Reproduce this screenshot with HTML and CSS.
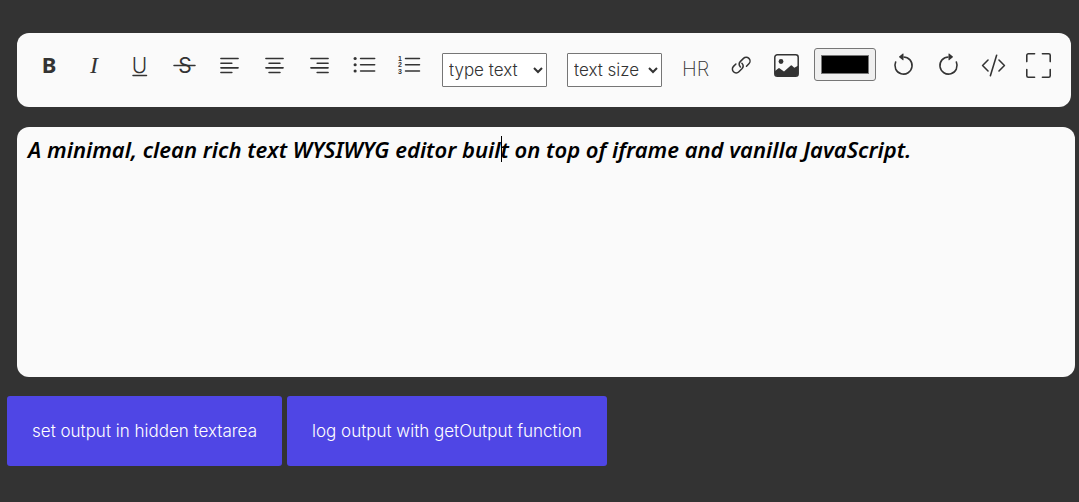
FILE: index.html
```html
<!DOCTYPE html>
<html lang="en">
<head>
<meta charset="utf-8">
<title>Rich text editor</title>
<link rel="stylesheet" href="styles.css">
</head>
<body>
<main class="page">
  <div class="toolbar" role="toolbar" aria-label="Formatting">
    <button class="tool" type="button" aria-label="Bold"><svg class="icon" viewBox="0 0 25 25"><text class="glyph bold" x="12" y="20">B</text></svg></button>
    <button class="tool" type="button" aria-label="Italic"><svg class="icon" viewBox="0 0 25 25"><text class="glyph italic" x="12" y="20">I</text></svg></button>
    <button class="tool" type="button" aria-label="Underline"><svg class="icon" viewBox="0 0 25 25"><text class="glyph" x="12.5" y="20">U</text><path class="line" d="M6 22.5h13.5"/></svg></button>
    <button class="tool" type="button" aria-label="Strikethrough"><svg class="icon" viewBox="0 0 25 25"><text class="glyph strike" x="13" y="20">S</text><path class="line" d="M2 12.5h21"/></svg></button>
    <button class="tool" type="button" aria-label="Align left"><svg class="icon" viewBox="0 0 16 16"><path class="stroke" d="M2.5 3.5h11M2.5 6.5h7M2.5 9.5h11M2.5 12.5h7"/></svg></button>
    <button class="tool" type="button" aria-label="Align center"><svg class="icon" viewBox="0 0 16 16"><path class="stroke" d="M2.5 3.5h11M4.5 6.5h7M2.5 9.5h11M4.5 12.5h7"/></svg></button>
    <button class="tool" type="button" aria-label="Align right"><svg class="icon" viewBox="0 0 16 16"><path class="stroke" d="M2.5 3.5h11M6.5 6.5h7M2.5 9.5h11M6.5 12.5h7"/></svg></button>
    <button class="tool" type="button" aria-label="Bulleted list"><svg class="icon" viewBox="0 0 16 16"><path class="stroke" d="M5.5 3.5h9M5.5 7.5h9M5.5 11.5h9"/><circle cx="2" cy="3.5" r="1"/><circle cx="2" cy="7.5" r="1"/><circle cx="2" cy="11.5" r="1"/></svg></button>
    <button class="tool" type="button" aria-label="Numbered list"><svg class="icon" viewBox="0 0 25 25"><path class="line" d="M8.500 5.500h14M8.500 11.700h14M8.500 18h14"/><text class="digit" x="3" y="8">1</text><text class="digit" x="3" y="14">2</text><text class="digit" x="3" y="21">3</text></svg></button>
    <select class="choice choice-type" aria-label="Text type"><option>type text</option><option>heading</option><option>paragraph</option></select>
    <select class="choice choice-size" aria-label="Text size"><option>text size</option><option>small</option><option>large</option></select>
    <button class="tool tool-rule" type="button" aria-label="Horizontal rule">HR</button>
    <button class="tool" type="button" aria-label="Link"><svg class="icon" viewBox="0 0 25 25"><g class="link"><path d="M11.4 13.9a4 4 0 0 1 .1-5.5l3-3a3.8 3.8 0 0 1 5.4 5.4l-2.4 2.4"/><path d="M12.9 10.3a4 4 0 0 1 0 5.5l-3 3a3.8 3.8 0 0 1-5.4-5.4l2.4-2.4"/></g></svg></button>
    <button class="tool" type="button" aria-label="Image"><svg class="icon" viewBox="0 0 25 25"><rect class="frame" x="0.8" y="1.8" width="23.4" height="21.4" rx="2.5"/><circle cx="7" cy="8.5" r="2.4"/><path d="M1 18l3.200-2.600q.8-.6 1.600 0l4.200 3.100 6.500-5.800q.8-.8 1.600 0l2.200 2 3.700-1.900V21q0 2-2 2H3q-2 0-2-2z"/></svg></button>
    <input class="color" type="color" value="#000000" aria-label="Text color">
    <button class="tool" type="button" aria-label="Undo"><svg class="icon" viewBox="0 0 16 16"><path d="M8 3a5 5 0 1 1-4.546 2.914.5.5 0 0 0-.908-.417A6 6 0 1 0 8 2v1z"/><path d="M8 4.466V.534a.25.25 0 0 0-.41-.192L5.23 2.308a.25.25 0 0 0 0 .384l2.36 1.966A.25.25 0 0 0 8 4.466z"/></svg></button>
    <button class="tool" type="button" aria-label="Redo"><svg class="icon" viewBox="0 0 16 16"><path d="M8 3a5 5 0 1 0 4.546 2.914.5.5 0 0 1 .908-.417A6 6 0 1 1 8 2v1z"/><path d="M8 4.466V.534a.25.25 0 0 1 .41-.192l2.36 1.966c.12.1.12.284 0 .384L8.41 4.658A.25.25 0 0 1 8 4.466z"/></svg></button>
    <button class="tool" type="button" aria-label="Source code"><svg class="icon" viewBox="0 0 16 16"><path class="stroke" d="M10 1.5l-4 13M4.5 4.5L1 8l3.500 3.500M11.500 4.500L15 8l-3.500 3.500"/></svg></button>
    <button class="tool" type="button" aria-label="Full screen"><svg class="icon" viewBox="0 0 16 16"><path class="stroke" d="M.5 5.500v-4a1 1 0 0 1 1-1h4M10.500.5h4a1 1 0 0 1 1 1v4M15.500 10.500v4a1 1 0 0 1-1 1h-4M5.500 15.500h-4a1 1 0 0 1-1-1v-4"/></svg></button>
  </div>
  <div class="editor" contenteditable="true" role="textbox" aria-label="Editor" spellcheck="false">A minimal, clean rich text WYSIWYG editor buil<span class="caret"></span>t on top of iframe and vanilla JavaScript.</div>
  <div class="actions">
    <button class="action" type="button">set output in hidden textarea</button>
    <button class="action" type="button">log output with getOutput function</button>
  </div>
</main>
</body>
</html>
```

FILE: styles.css
```css
* {
  box-sizing: border-box;
}

body {
  margin: 0;
  background: #333;
  color: #333;
  font-family: Inter, "Liberation Sans", sans-serif;
  font-weight: 300;
}

.page {
  padding: 33px 4px 36px 7px;
}

.toolbar {
  display: flex;
  align-items: flex-start;
  gap: 20px;
  min-height: 74px;
  margin: 0 4px 20px 10px;
  padding: 20px;
  border-radius: 12px;
  background: #fafafa;
}

.tool {
  flex: none;
  width: 25px;
  padding: 0;
  border: 0;
  background: none;
  color: #333;
  font: inherit;
  cursor: pointer;
}

.icon {
  display: block;
  width: 25px;
  height: 25px;
  fill: #333;
  overflow: visible;
}

.stroke,
.line,
.frame,
.link {
  fill: none;
  stroke: #333;
  stroke-linecap: round;
  stroke-linejoin: round;
}

.line,
.frame,
.link {
  stroke-width: 1.5;
}

.glyph {
  font-family: Inter, sans-serif;
  font-size: 21px;
  font-weight: 300;
  text-anchor: middle;
}

.bold {
  font-family: "Noto Sans", sans-serif;
  font-size: 22px;
  font-weight: 700;
}

.italic {
  font-family: "Liberation Serif", serif;
  font-size: 24px;
  font-style: italic;
  font-weight: 400;
}

.strike {
  font-weight: 400;
}

.digit {
  font-family: "Liberation Sans", sans-serif;
  font-size: 7px;
  font-weight: 700;
  text-anchor: middle;
}

.choice {
  flex: none;
  height: 34px;
  padding: 0 2px;
  border: 1px solid #767676;
  border-radius: 1px;
  background-color: #fff;
  color: #333;
  font: inherit;
  font-size: 17px;
}

.choice-type {
  width: 105px;
}

.choice-size {
  width: 95px;
}

.tool-rule {
  width: 27px;
  font-size: 20px;
  font-weight: 200;
  line-height: 32px;
}

.color {
  flex: none;
  width: 62px;
  height: 33px;
  margin: -5px -5px 0;
  padding: 2px 4px;
  border: 1px solid #767676;
  border-radius: 3px;
  background: #efefef;
}

.editor {
  min-height: 250px;
  margin: 0 0 19px 10px;
  padding: 8px 11px;
  border-radius: 12px;
  outline: 0;
  background: #fafafa;
  color: #000;
  font: italic 600 22px/28px "Noto Sans", sans-serif;
}

.caret {
  position: relative;
}

.caret::after {
  content: "";
  position: absolute;
  top: 2px;
  left: 0;
  width: 1px;
  height: 26px;
  background: #000;
}

.actions {
  display: flex;
  flex-wrap: wrap;
  gap: 5px;
}

.action {
  padding: 25px;
  border: 0;
  border-radius: 3px;
  background: #4f46e5;
  color: #fff;
  font: inherit;
  font-size: 17px;
  line-height: 20px;
  cursor: pointer;
}
```
